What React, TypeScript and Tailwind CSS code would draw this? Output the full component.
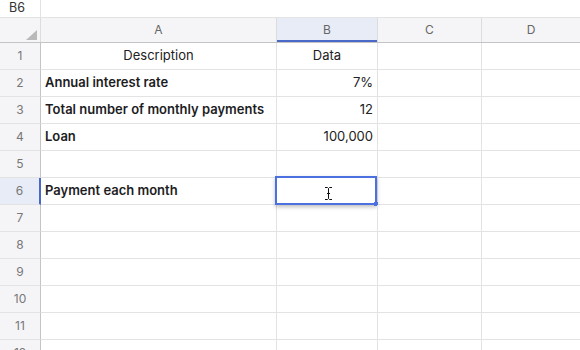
import React from 'react';

const rows: { a: string; b: string; bold?: boolean; bAlign?: 'center' | 'right' }[] = [
  { a: 'Description', b: 'Data', bAlign: 'center' },
  { a: 'Annual interest rate', b: '7%', bold: true },
  { a: 'Total number of monthly payments', b: '12', bold: true },
  { a: 'Loan', b: '100,000', bold: true },
  { a: '', b: '' },
  { a: 'Payment each month', b: '', bold: true },
  { a: '', b: '' },
  { a: '', b: '' },
  { a: '', b: '' },
  { a: '', b: '' },
  { a: '', b: '' },
  { a: '', b: '' },
];

const grid = 'grid grid-cols-[41px_236px_101px_104px_1fr]';

function IBeam() {
  return (
    <svg width="9" height="15" viewBox="0 0 9 15" className="absolute left-[47px] top-[8px]">
      <path d="M1 1.5h2.5L4.5 2.5L5.5 1.5H8M4.5 2.5V12.5M1 13.5h2.5L4.5 12.5L5.5 13.5H8M3 7.5h3" fill="none" stroke="#fff" strokeWidth="2.2" />
      <path d="M1 1.5h2.5L4.5 2.5L5.5 1.5H8M4.5 2.5V12.5M1 13.5h2.5L4.5 12.5L5.5 13.5H8M3 7.5h3" fill="none" stroke="#111" strokeWidth="1" />
    </svg>
  );
}

export default function App() {
  return (
    <div className="w-[580px] h-[350px] overflow-hidden bg-white text-[13px] text-[#222] font-['Inter','Liberation_Sans',sans-serif]">
      <div className="flex h-[18px] border-b border-[#e3e3e3]">
        <div className="w-[41px] border-r border-[#e3e3e3] pl-[9px] text-[12.5px] leading-[16px] text-[#333]">B6</div>
        <div className="flex-1" />
      </div>

      <div className={`${grid} h-[25px] bg-[#f5f5f7] border-b border-[#c4c4c4] text-[12px] text-[#666]`}>
        <div className="relative border-r border-[#dcdcdc]">
          <div className="absolute left-[26px] top-[12px] w-[11px] h-[10px] bg-[#b9b9b9] [clip-path:polygon(100%_0,100%_100%,0_100%)]" />
        </div>
        <div className="flex items-center justify-center border-r border-[#dcdcdc]">A</div>
        <div className="flex items-center justify-center border-r border-[#dcdcdc] bg-[#e7ecf6] shadow-[inset_0_-2px_0_#4a68c8]">B</div>
        <div className="flex items-center justify-center border-r border-[#dcdcdc]">C</div>
        <div className="flex items-center justify-center">D</div>
      </div>

      {rows.map((r, i) => {
        const active = i === 5;
        return (
          <div key={i} className={`${grid} h-[27px]`}>
            <div
              className={`flex items-center justify-center border-b border-[#e3e3e3] text-[12px] text-[#777] ${
                active ? 'bg-[#e7ecf6] border-r-2 border-r-[#4a68c8]' : 'bg-[#f5f5f7] border-r border-r-[#c4c4c4]'
              }`}
            >
              {i + 1}
            </div>
            <div
              className={`flex items-center px-[4px] border-r border-b border-[#e3e3e3] whitespace-nowrap overflow-hidden ${
                i === 0 ? 'justify-center' : ''
              } ${r.bold ? 'font-semibold text-[#1d1d1f]' : ''}`}
            >
              {r.a}
            </div>
            <div
              className={`relative flex items-center px-[4px] border-r border-b border-[#e3e3e3] ${
                r.bAlign === 'center' ? 'justify-center' : 'justify-end'
              }`}
            >
              {r.b}
              {active && (
                <div className="absolute -left-[2px] -top-[2px] w-[102px] h-[29px] border-2 border-[#4d70e0] shadow-[0_2px_4px_rgba(0,0,0,0.25)]">
                  <div className="absolute -right-[3px] -bottom-[3px] w-[4px] h-[4px] bg-[#4d70e0]" />
                  <IBeam />
                </div>
              )}
            </div>
            <div className="border-r border-b border-[#e3e3e3]" />
            <div className="border-b border-[#e3e3e3]" />
          </div>
        );
      })}
    </div>
  );
}
